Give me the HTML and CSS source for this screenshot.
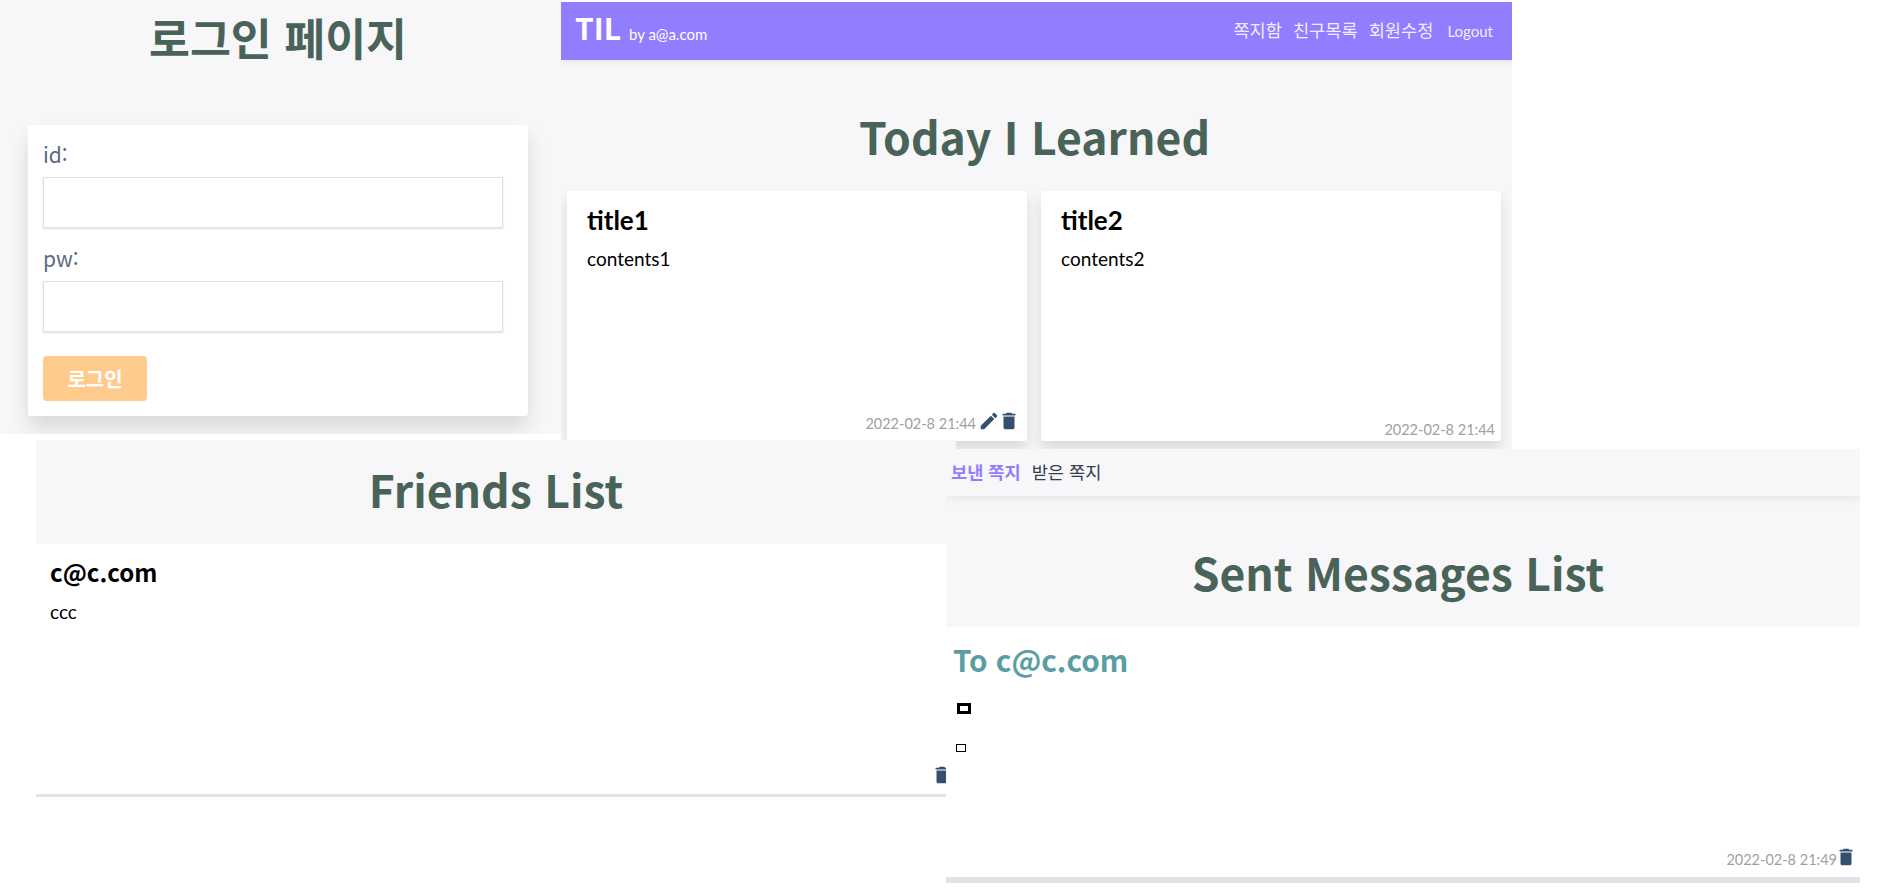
FILE: index.html
```html
<!DOCTYPE html>
<html lang="ko">
<head>
    <meta charset="UTF-8">
    <meta name="viewport" content="width=device-width, initial-scale=1.0">
    <title>TIL</title>
    <link rel="stylesheet" href="styles.css">
</head>
<body>
    <div class="desk">
        <!-- 로그인 -->
        <section class="window login-window">
            <h1 class="page-title login-title">로그인 페이지</h1>
            <form class="login-card">
                <label class="field-label">id:</label>
                <input class="field-input" type="text">
                <label class="field-label">pw:</label>
                <input class="field-input" type="password">
                <button class="login-button" type="button">로그인</button>
            </form>
        </section>

        <!-- 글 목록 -->
        <section class="window til-window">
            <header class="top-bar">
                <div class="brand"><span class="brand-name">TIL</span><span class="brand-by">by a@a.com</span></div>
                <nav class="top-links">
                    <a>쪽지함</a>
                    <a>친구목록</a>
                    <a>회원수정</a>
                    <a class="logout">Logout</a>
                </nav>
            </header>
            <h1 class="page-title til-title">Today I Learned</h1>
            <div class="card-row">
                <article class="card">
                    <h2 class="card-title">title1</h2>
                    <p class="card-text">contents1</p>
                    <div class="card-foot">
                        <span class="date">2022-02-8 21:44</span>
                        <svg class="icon pencil" viewBox="0 0 24 24"><path d="M3 17.25V21h3.75L17.81 9.94l-3.75-3.75L3 17.25zM20.71 7.04c.39-.39.39-1.02 0-1.41l-2.34-2.34c-.39-.39-1.02-.39-1.41 0l-1.83 1.83 3.75 3.75 1.83-1.83z"/></svg>
                        <svg class="icon" viewBox="0 0 24 24"><path d="M6 19c0 1.1.9 2 2 2h8c1.1 0 2-.9 2-2V7H6v12zM19 4h-3.5l-1-1h-5l-1 1H5v2h14V4z"/></svg>
                    </div>
                </article>
                <article class="card">
                    <h2 class="card-title">title2</h2>
                    <p class="card-text">contents2</p>
                    <div class="card-foot card-foot-plain">
                        <span class="date">2022-02-8 21:44</span>
                    </div>
                </article>
            </div>
        </section>

        <!-- 친구 목록 -->
        <section class="window friends-window">
            <h1 class="page-title friends-title">Friends List</h1>
            <article class="wide-card friend-card">
                <h2 class="card-title friend-name">c@c.com</h2>
                <p class="card-text">ccc</p>
                <div class="card-foot">
                    <svg class="icon" viewBox="0 0 24 24"><path d="M6 19c0 1.1.9 2 2 2h8c1.1 0 2-.9 2-2V7H6v12zM19 4h-3.5l-1-1h-5l-1 1H5v2h14V4z"/></svg>
                </div>
            </article>
        </section>

        <!-- 쪽지함 -->
        <section class="window messages-window">
            <nav class="message-tabs">
                <a class="tab-active">보낸 쪽지</a>
                <a>받은 쪽지</a>
            </nav>
            <h1 class="page-title messages-title">Sent Messages List</h1>
            <article class="wide-card message-card">
                <h2 class="message-to">To c@c.com</h2>
                <div class="tofu tofu-title"></div>
                <div class="tofu tofu-text"></div>
                <div class="card-foot">
                    <span class="date">2022-02-8 21:49</span>
                    <svg class="icon" viewBox="0 0 24 24"><path d="M6 19c0 1.1.9 2 2 2h8c1.1 0 2-.9 2-2V7H6v12zM19 4h-3.5l-1-1h-5l-1 1H5v2h14V4z"/></svg>
                </div>
            </article>
        </section>
    </div>
</body>
</html>
```

FILE: styles.css
```css
* {
    box-sizing: border-box;
}

body {
    margin: 0;
    background-color: #ffffff;
    font-family: Lato, "Noto Sans CJK KR", sans-serif;
}

.desk {
    position: relative;
    width: 1886px;
    height: 891px;
    overflow: hidden;
}

/* the picture is four page captures pasted on one canvas */
.window {
    position: absolute;
    overflow: hidden;
    background-color: #f7f7f9;
}

.login-window {
    left: 0;
    top: 0;
    width: 561px;
    height: 434px;
}

.til-window {
    left: 561px;
    top: 2px;
    width: 951px;
    height: 448px;
}

.friends-window {
    left: 36px;
    top: 440px;
    width: 920px;
    height: 360px;
    background-color: #ffffff;
}

.messages-window {
    left: 946px;
    top: 449px;
    width: 914px;
    height: 436px;
    background-color: #ffffff;
}

.page-title {
    margin: 0;
    font-family: "Noto Sans CJK KR", sans-serif;
    font-size: 44.5px;
    font-weight: 700;
    line-height: 1.2;
    color: #4a6358;
    text-align: center;
}

/* login */
.login-title {
    width: 556px;
    height: 125px;
    padding-top: 10px;
}

.login-card {
    display: flex;
    flex-direction: column;
    align-items: flex-start;
    width: 500px;
    height: 291px;
    margin-left: 28px;
    padding: 15px;
    background: #ffffff;
    border-radius: 3px;
    box-shadow: 0 12px 20px rgba(0, 0, 0, 0.12);
}

.field-label {
    height: 37px;
    font-family: "Noto Sans CJK KR", sans-serif;
    font-size: 21px;
    font-weight: 400;
    line-height: 29px;
    color: #5b6a85;
}

.field-input {
    width: 460px;
    height: 51px;
    margin-bottom: 16px;
    border: 1px solid #dde2e8;
    box-shadow: 0 1px 2px rgba(0, 0, 0, 0.12);
}

.login-button {
    width: 104px;
    height: 45px;
    margin-top: 8px;
    border: none;
    border-radius: 4px;
    background-color: #ffcb8c;
    color: #ffffff;
    font-family: "Noto Sans CJK KR", sans-serif;
    font-size: 20px;
    font-weight: 700;
    line-height: 1;
}

/* top bar */
.top-bar {
    display: flex;
    justify-content: space-between;
    align-items: center;
    height: 58px;
    padding: 0 19px 0 14px;
    background-color: #937dff;
    box-shadow: 0 2px 8px rgba(0, 0, 0, 0.08);
}

.brand {
    margin-top: -8px;
    color: #ffffff;
}

.brand-name {
    font-family: "Noto Sans CJK KR", sans-serif;
    font-size: 30px;
    font-weight: 700;
}

.brand-by {
    margin-left: 8px;
    font-size: 15px;
}

.top-links {
    display: flex;
    align-items: center;
    gap: 11px;
    margin-top: -4px;
    color: #efecff;
    font-family: "Noto Sans CJK KR", sans-serif;
    font-size: 17.6px;
    font-weight: 400;
}

.logout {
    margin: 3px 0 0 3px;
    font-family: Lato, sans-serif;
    font-size: 15px;
}

.til-title {
    height: 131px;
    padding-top: 49px;
    padding-right: 4px;
}

.card-row {
    display: flex;
    gap: 14px;
    padding-left: 6px;
}

.card {
    display: flex;
    flex-direction: column;
    width: 460px;
    height: 250px;
    padding: 12px 6px 0 20px;
    background: #ffffff;
    border-radius: 3px;
    box-shadow: 0 8px 14px rgba(0, 0, 0, 0.12);
}

.card-title {
    margin: 0;
    font-size: 26px;
    font-weight: 700;
    line-height: 34px;
    color: #000000;
}

.card-text {
    margin: 10px 0 0;
    font-size: 19px;
    line-height: 24px;
    color: #000000;
}

.card-foot {
    display: flex;
    justify-content: flex-end;
    align-items: center;
    margin-top: auto;
    height: 32px;
    padding: 0 1px 8px 0;
}

.card-foot-plain {
    height: 28px;
    padding: 0;
}

.date {
    margin-top: 4px;
    font-size: 14.5px;
    color: #a0a0a0;
}

.icon {
    display: block;
    width: 22px;
    height: 22px;
    fill: #34506e;
}

.pencil {
    margin: 0 -2px 0 2px;
}

/* friends */
.friends-title {
    height: 104px;
    padding-top: 22px;
    background-color: #f7f7f9;
}

.wide-card {
    display: flex;
    flex-direction: column;
    background: #ffffff;
}

.friend-card {
    height: 253px;
    padding: 11px 0 0 14px;
    border-bottom: 3px solid #e3e3e5;
}

.friend-name {
    font-family: "Noto Sans CJK KR", sans-serif;
    font-size: 24px;
}

.friend-card .card-text {
    margin-top: 11px;
}

.friend-card .card-foot {
    padding: 0 3px 7px 0;
}

/* messages */
.message-tabs {
    position: relative;
    display: flex;
    gap: 11px;
    align-items: center;
    height: 47px;
    padding: 0 0 3px 5px;
    background-color: #f7f7f9;
    box-shadow: 0 2px 8px rgba(0, 0, 0, 0.08);
    font-family: "Noto Sans CJK KR", sans-serif;
    font-size: 17.6px;
    color: #333d4d;
}

.tab-active {
    font-weight: 700;
    color: #937dff;
}

.messages-title {
    height: 131px;
    padding-top: 49px;
    padding-right: 10px;
    background-color: #f7f7f9;
}

.message-card {
    height: 256px;
    padding: 15px 0 0 7px;
    border-bottom: 6px solid #e3e3e5;
}

.message-to {
    margin: 0;
    font-family: "Noto Sans CJK KR", sans-serif;
    font-size: 29.6px;
    font-weight: 700;
    line-height: 36px;
    color: #5a9ea3;
}

.tofu {
    background: #ffffff;
}

.tofu-title {
    width: 14px;
    height: 11px;
    margin: 25px 0 0 4px;
    border: 3px solid #000000;
}

.tofu-text {
    width: 10px;
    height: 8px;
    margin: 30px 0 0 3px;
    border: 1px solid #000000;
}

.message-card .card-foot {
    padding: 0 3px 8px 0;
}

.message-card .date {
    margin-right: -2px;
}
```
